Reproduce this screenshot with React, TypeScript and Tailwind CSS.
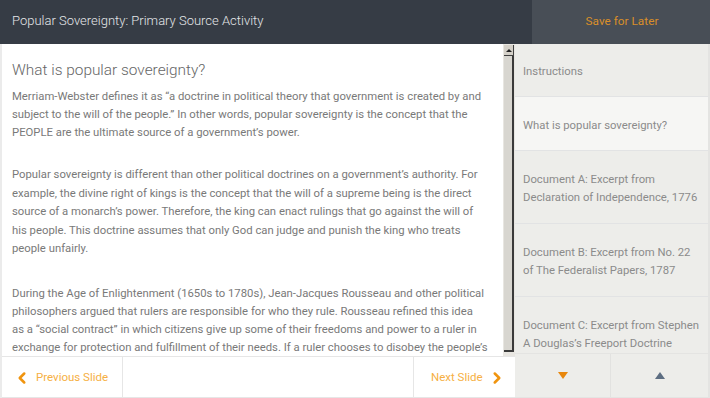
import { ChevronLeft, ChevronRight } from 'lucide-react';

const sideItems = [
  { lines: ['Instructions'], h: 'h-[53px]', active: false },
  { lines: ['What is popular sovereignty?'], h: 'h-[54px]', active: true },
  { lines: ['Document A: Excerpt from', 'Declaration of Independence, 1776'], h: 'h-[73px]', active: false },
  { lines: ['Document B: Excerpt from No. 22', 'of The Federalist Papers, 1787'], h: 'h-[73px]', active: false },
  { lines: ['Document C: Excerpt from Stephen', 'A Douglas’s Freeport Doctrine'], h: 'h-[73px]', active: false },
];

const App = () => {
  return (
    <div
      className="w-[710px] h-[398px] overflow-hidden flex flex-col bg-white"
      style={{ fontFamily: 'Roboto, "Noto Sans", sans-serif' }}
    >
      {/* header */}
      <div className="flex h-[44px] shrink-0">
        <div className="flex-1 bg-[#363c45] flex items-center px-[12px] pb-[3px] text-[13px] font-light text-[#e4e6e8]">
          Popular Sovereignty: Primary Source Activity
        </div>
        <div className="w-[178px] bg-[#484e56] flex items-center justify-center pl-[2px] pb-[1px] text-[11.8px] text-[#d98e2a]">
          Save for Later
        </div>
      </div>

      <div className="flex flex-1 min-h-0">
        {/* main column */}
        <div className="w-[515px] flex flex-col border-l-2 border-[#ebebeb]">
          <div className="flex flex-1 min-h-0">
            <div className="flex-1 overflow-hidden pl-[10px] pr-[10px] pt-[16px] text-[#797979]">
              <h2 className="text-[15.4px] font-light text-[#666] leading-[20px] mb-[8px]">
                What is popular sovereignty?
              </h2>
              <p className="text-[11.3px] leading-[18px] mb-[24px] whitespace-nowrap">
                Merriam-Webster defines it as “a doctrine in political theory that government is created by and<br />
                subject to the will of the people.” In other words, popular sovereignty is the concept that the<br />
                PEOPLE are the ultimate source of a government’s power.
              </p>
              <p className="text-[11.3px] leading-[18.5px] mb-[26px] whitespace-nowrap">
                Popular sovereignty is different than other political doctrines on a government’s authority. For<br />
                example, the divine right of kings is the concept that the will of a supreme being is the direct<br />
                source of a monarch’s power. Therefore, the king can enact rulings that go against the will of<br />
                his people. This doctrine assumes that only God can judge and punish the king who treats<br />
                people unfairly.
              </p>
              <p className="text-[11.3px] leading-[18px] whitespace-nowrap">
                During the Age of Enlightenment (1650s to 1780s), Jean-Jacques Rousseau and other political<br />
                philosophers argued that rulers are responsible for who they rule. Rousseau refined this idea<br />
                as a “social contract” in which citizens give up some of their freedoms and power to a ruler in<br />
                exchange for protection and fulfillment of their needs. If a ruler chooses to disobey the people’s
              </p>
            </div>
            {/* old style scrollbar */}
            <div className="w-[12px] flex flex-col bg-[#e8e6e1]">
              <div className="h-[11px] mx-[1px] mt-[1px] bg-[#d4d0c8] border-b border-r border-[#404040] flex items-center justify-center">
                <div className="w-0 h-0 border-l-[3px] border-r-[3px] border-b-[3px] border-l-transparent border-r-transparent border-b-[#222]" />
              </div>
              <div className="flex-1 mx-[1px] mb-[4px] bg-[#d8d6d0] border-r-2 border-b-2 border-[#3a3a3a]" />
            </div>
          </div>
          {/* footer */}
          <div className="h-[42px] shrink-0 flex border-t border-[#e6e6e6] border-b border-b-[#e6e6e6]">
            <div className="w-[121px] border-r border-[#e6e6e6] flex items-center pl-[11px] pt-[1px] gap-[5px]">
              <ChevronLeft size={18} strokeWidth={3.4} className="text-[#f0940f]" />
              <span className="text-[11.5px] text-[#f6b043]">Previous Slide</span>
            </div>
            <div className="flex-1" />
            <div className="w-[102px] border-l border-[#e6e6e6] flex items-center pl-[17px] pt-[1px] gap-[5px]">
              <span className="text-[11.5px] text-[#f6b043]">Next Slide</span>
              <ChevronRight size={18} strokeWidth={3.4} className="text-[#f0940f]" />
            </div>
          </div>
        </div>

        {/* sidebar */}
        <div className="flex-1 flex flex-col bg-[#ededea] border-r-2 border-[#e4e4e2]">
          <div className="flex-1 min-h-0 overflow-hidden">
            {sideItems.map((item) => (
              <div
                key={item.lines[0]}
                className={`${item.h} flex items-center pl-[8px] pr-[2px] pt-[4px] border-b border-[#e2e3e4] text-[11.3px] leading-[18px] text-[#8b8b8b] whitespace-nowrap ${
                  item.active ? 'bg-[#f6f6f4]' : ''
                }`}
              >
                <span>
                  {item.lines.map((l, i) => (
                    <span key={i} className="block">
                      {l}
                    </span>
                  ))}
                </span>
              </div>
            ))}
          </div>
          <div className="h-[45px] shrink-0 flex border-t border-[#e4e4e2] border-b border-b-[#e4e4e2]">
            <div className="w-[96px] border-r border-[#e2e2e0] flex items-center justify-center">
              <div className="w-0 h-0 border-l-[5px] border-r-[5px] border-t-[7px] border-l-transparent border-r-transparent border-t-[#e8870d]" />
            </div>
            <div className="flex-1 flex items-center justify-center">
              <div className="w-0 h-0 border-l-[5px] border-r-[5px] border-b-[7px] border-l-transparent border-r-transparent border-b-[#5d6e82]" />
            </div>
          </div>
        </div>
      </div>
    </div>
  );
};

export default App;
